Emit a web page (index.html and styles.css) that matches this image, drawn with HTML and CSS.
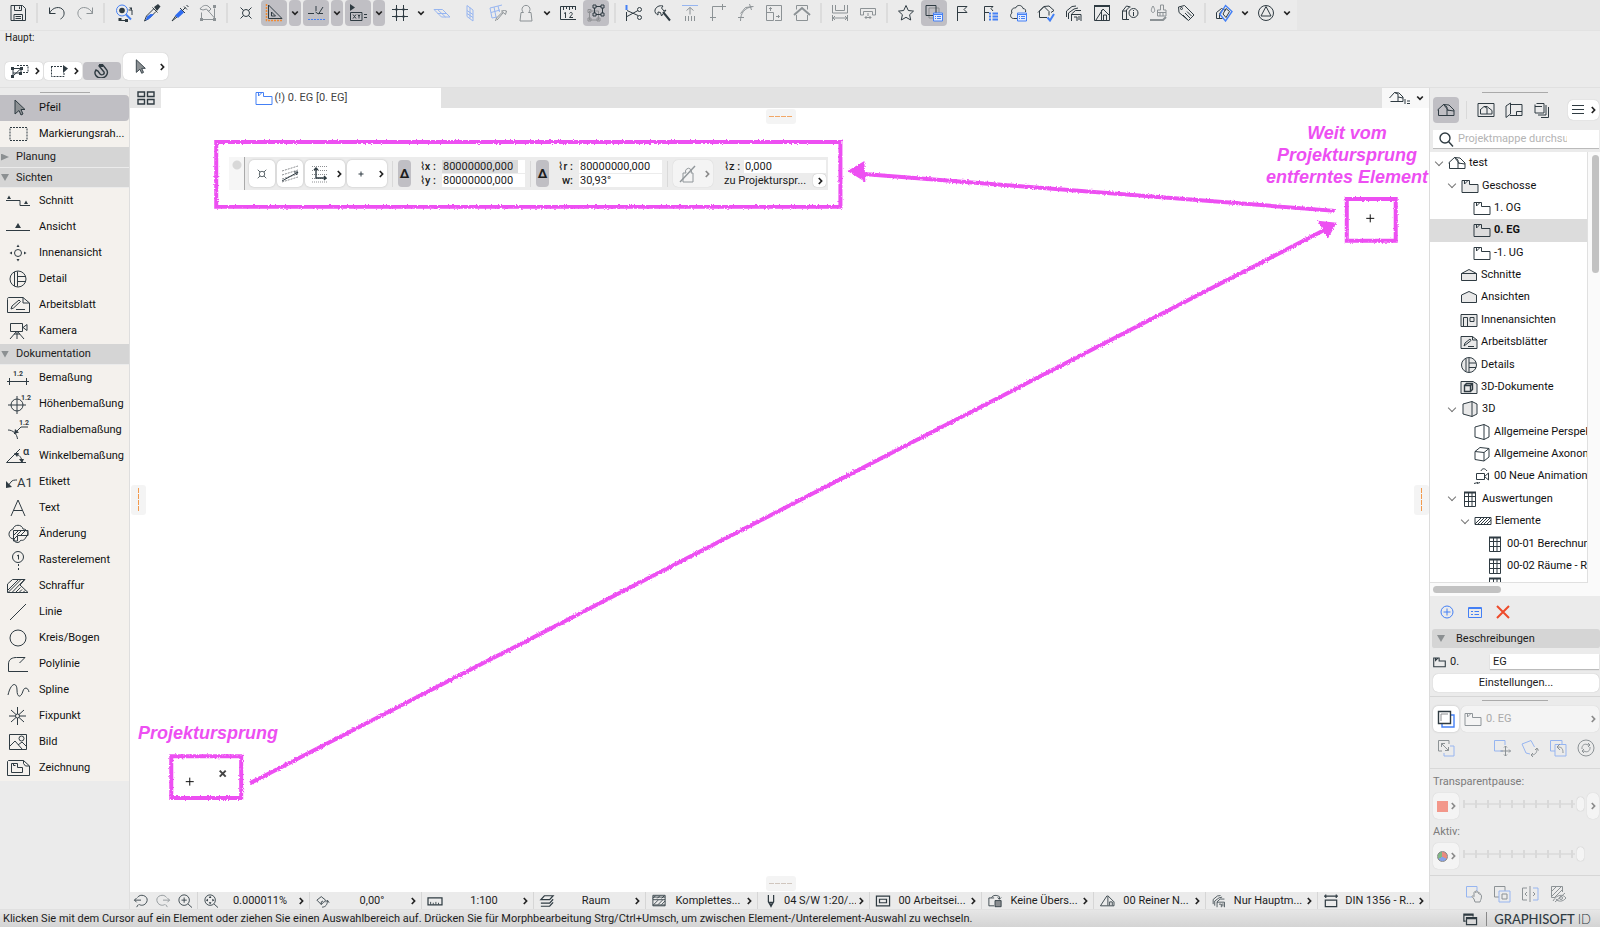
FILE: index.html
```html
<!DOCTYPE html>
<html lang="de">
<head>
<meta charset="utf-8">
<meta name="viewport" content="width=device-width, initial-scale=1">
<title>(!) 0. EG [0. EG]</title>
<link rel="stylesheet" href="styles.css">
</head>
<body>
<svg class="sprite" aria-hidden="true">
  <symbol id="down" viewBox="0 0 10 10"><path class="bold" d="M2.2 3.5 5 6.3 7.8 3.5"/></symbol>
  <symbol id="next" viewBox="0 0 10 10"><path class="bold" d="M3.8 2 6.6 5 3.8 8"/></symbol>
  <symbol id="save" viewBox="0 0 18 18"><path d="M2 1.5h11.5l3 3v12H2zM5.500 1.500v5h7v-5M10.500 2.500v2.500M5 16.500v-6h8.500v6M6.500 12.500h5.500M6.500 14.500h5.500"/></symbol>
  <symbol id="undo" viewBox="0 0 18 18"><path d="M1.500 3.500v6h6M1.500 9.500C4 3 12.500 1.500 15.500 6.500c1.500 3.500 0 7-3 8.500"/></symbol>
  <symbol id="redo" viewBox="0 0 18 18"><path d="M16.500 3.500v6h-6M16.500 9.500C14 3 5.500 1.500 2.500 6.500c-1.500 3.500 0 7 3 8.500"/></symbol>
  <symbol id="find" viewBox="0 0 18 18"><circle class="blue" cx="7" cy="6.500" r="5.500"/><circle class="solid" cx="7" cy="6.500" r="2.800"/><path class="blue thick" d="m11 10.500 5 5"/><path d="M13.500 6h3.500V11M5 14.500v2h6"/><path class="solid" d="M14 3.500h3v3zM3.500 14h3v3h-3zM10 15h3v3h-3z"/></symbol>
  <symbol id="dropper" viewBox="0 0 18 18"><path class="solid" d="m11 3 4-3 2.500 2.500L14 7z"/><path d="m9.500 3.500 5 5M10.500 5 3.500 12l-2 5 4.500-2.500 7-7"/><path class="bluefill" d="m7.500 10 3.500.2L6 15l-3.500 1.500 1.500-4z"/></symbol>
  <symbol id="syringe" viewBox="0 0 18 18"><path d="m9 4 5 5M13 2.500l3 3M15.500 1l2 2M11.500 6.500l3-3M5 11.500 1 17l5-4"/><path class="bluefill" d="m10 5.500 3 3L7 14l-3-2.500z"/></symbol>
  <symbol id="frametool" viewBox="0 0 18 18"><path d="M2.500 8.500v7M2.500 15.500h13v-11M8.500 6l7 8M1 5c2-3 5-4.500 8-3l3 3-2.500 2.500L7.500 5 4 6z"/><path class="solid" d="M1 14h3v3H1zM14 14h3v3h-3zM14 1h3v3h-3z"/></symbol>
  <symbol id="gravity" viewBox="0 0 18 18"><circle cx="9" cy="9" r="3.500"/><path d="m3.500 3.500 3 3M14.500 3.500l-3 3M3.500 14.500l3-3M14.500 14.500l-3-3"/></symbol>
  <symbol id="setsquare" viewBox="0 0 18 18"><path class="orange dash" d="M1.500 0v16.500H18"/><path d="M3.500 1v13.500H17zM6.500 8v4h4z"/></symbol>
  <symbol id="snapguide" viewBox="0 0 18 18"><path d="M1 9.500h6M11.500 9.500H16M9 2v5M8.500 8l3 2L16 3"/><path class="blue dash" d="M1 15.500h17"/></symbol>
  <symbol id="tracker" viewBox="0 0 18 18"><path class="solid" d="M1 0v7l5-3.500z"/><path d="M1.500 8.500H13v8H1.500zM4 10.500l3 4M7 10.500l-3 4M9 10.500l1 2 1-2M10 12.500v2M15 10.500h3M15 13.500h3"/></symbol>
  <symbol id="hash" viewBox="0 0 18 18"><path d="M5.500 1v16M12.500 1v16M1 5.500h16M1 12.500h16"/><path class="solid" d="M4.500 4.500h2v2h-2zM11.500 4.500h2v2h-2zM4.500 11.500h2v2h-2zM11.500 11.500h2v2h-2z"/></symbol>
  <symbol id="plane" viewBox="0 0 18 18"><path class="blue" d="M1 5.500h8.500L17 13H8.500zM4.500 9.500h8.500M4.500 5.500 12.500 13"/></symbol>
  <symbol id="wallplane" viewBox="0 0 18 18"><path class="blue" d="M6 1.500v11l6 4.500V6zM9 3.500v11M6 6.500l6 4M6 9.500l6 4"/></symbol>
  <symbol id="gridpick" viewBox="0 0 18 18"><path class="blue" d="m1 4 12-3M1 4l2 10 5-1M2 8.500 11 6M5 3l2 10M9 2l1.500 6"/><path d="m8 16 6-7M6.500 17l1-3 6-6M12.500 7l4 3.500 1-3.500-2-.5z"/></symbol>
  <symbol id="weight" viewBox="0 0 18 18"><path d="M6.500 8.500a4 4 0 1 1 5 0H14l1 8.500H3l1-8.500z"/></symbol>
  <symbol id="ruler12" viewBox="0 0 18 18"><path d="M17 2.500H1.500v13H17M4.500 3v3M7.500 3v2M10.500 3v3M13.500 3v2M16.500 3v3M5 9.500l1.500-1v5.500M10.500 9.500c1-2 3.500-1 2.500 1l-2.500 3h3.500"/></symbol>
  <symbol id="group" viewBox="0 0 18 18"><path class="gray" d="M2.500 7h9v9h-9zM1 5.500h3v3H1zM1 14h3v3H1zM10 14h3v3h-3z"/><path d="M7.500 2.500h8v8h-8z"/><path class="box" d="M6 1h3v3H6zM14 1h3v3h-3zM6 9h3v3H6zM14 9h3v3h-3z"/></symbol>
  <symbol id="scissors" viewBox="0 0 18 18"><path class="blue thick" d="M1.500 1v5"/><path d="M1.500 8v9M2 6.500l11 5M2 12.500l11-6"/><circle cx="14.500" cy="5.500" r="2"/><circle cx="14.500" cy="13.500" r="2"/></symbol>
  <symbol id="axe" viewBox="0 0 18 18"><path d="M2 6c1-3 4-5 8-4L8.500 4 11 7l2-1-4.500 6-1-3.500L5 8v3C3 10 1.500 8.500 2 6z"/><path class="thick" d="m10 8 7 8.500"/></symbol>
  <symbol id="elevate" viewBox="0 0 18 18"><path class="blue" d="M1 1.500h16"/><path d="M9 3.500v7M5.500 6.500 9 3.500l3.500 3M4.500 12v5M7.500 12v5M10.500 12v5M13.500 12v5"/></symbol>
  <symbol id="corner" viewBox="0 0 18 18"><path d="M3.500 17V2.500H17M1 13.500h6M13.500 0v6"/></symbol>
  <symbol id="fillet" viewBox="0 0 18 18"><path d="M3.500 17c0-8 4-13 12-14.500M1 13.500h6M12.500 0l2 6M3.500 9.500l5-6 8-1"/></symbol>
  <symbol id="resize" viewBox="0 0 18 18"><path d="M1.500 9V1.500h15v15H10M1.500 8.500h7v8h-7zM5.500 7V3.500M4 5l1.500-1.500L7 5M11 12.500h3.500M13 11l1.500 1.500L13 14"/></symbol>
  <symbol id="roof" viewBox="0 0 18 18"><path d="M3.500 5.500v-4h11v4M3.500 11v5.500h11V11"/><path class="thick" d="m1 11 8-7 8 7"/></symbol>
  <symbol id="spanwide" viewBox="0 0 18 18"><path d="M1.500 1v8h15V1M4.500 1v5.500h9V1M1.500 11v6M16.500 11v6M2 14h14M4 12l-2 2 2 2M14 12l2 2-2 2"/></symbol>
  <symbol id="spanlow" viewBox="0 0 18 18"><path d="M1.500 11V4.500h15V11h-3V7.500h-9V11zM6 13.500h6M7.500 12 6 13.500 7.500 15M10.500 12l1.500 1.500-1.500 1.500M9 9v3"/></symbol>
  <symbol id="star" viewBox="0 0 18 18"><path d="m9 1.500 2.300 5 5.200.6-3.900 3.600 1.100 5.300L9 13.300 4.300 16l1.100-5.300L1.500 7.100l5.200-.6z"/></symbol>
  <symbol id="layersettings" viewBox="0 0 18 18"><path class="gray" d="M4 4h10v10H4z"/><path d="M1 1.500h10v10H1z"/><path class="bluebox" d="M8.500 9h9v8h-9z"/><path class="blue" d="M8.500 10.500h9M10 12.500h1M12 12.500h4M10 14.500h1M12 14.500h4"/></symbol>
  <symbol id="flag" viewBox="0 0 18 18"><path d="M4.500 17V2.500H14l-3 3 3 3H4.500"/></symbol>
  <symbol id="flaglist" viewBox="0 0 18 18"><path d="M3.500 17V2.500H12l-2 2 2 2.500M3.500 8.500H8"/><path class="blue thick" d="M8 9.500h2M11.500 9.500H17M8 12.500h2M11.500 12.500H17M8 15.500h2M11.500 15.500H17"/></symbol>
  <symbol id="cloudlist" viewBox="0 0 18 18"><path d="M8 14.500H4.500c-3 0-4-4-1.500-5.500C1.500 6 4 3.500 6.500 4 8 .5 13 .5 14 4.500c2.500 0 3 2 2.500 3.500"/><path class="bluebox" d="M8.500 9h9v8h-9z"/><path class="blue" d="M8.500 10.500h9M10 12.500h1M12 12.500h4M10 14.500h1M12 14.500h4"/></symbol>
  <symbol id="housecheck" viewBox="0 0 18 18"><path d="M10 13.500H2.500V7L7 2.500l5 5v4M7 2.500 12 2l5 4.500-3 2M1 8.500 7 2.500"/><path class="blue thick" d="m10.500 13.500 2.500 3L17 10"/></symbol>
  <symbol id="houses" viewBox="0 0 18 18"><path d="M1.500 13V7L7 2.500l4-.5M3.500 15V9L9 5l4-1M6.500 17v-7l4-3.500H16M6.500 10.500H16v6.500M9 13h3v4M14 12v4"/></symbol>
  <symbol id="facade" viewBox="0 0 18 18"><path class="thick" d="M1 2h16"/><path d="M1.500 3v13.500h15V3M3 16 10 5l6 6M8.500 6v10M10.500 16v-5h3v5"/></symbol>
  <symbol id="wallinfo" viewBox="0 0 18 18"><circle cx="12.500" cy="9" r="4.500"/><path d="M12.500 8v4M12.500 6v1M8 15.500H1.500V7l4-5 4 1M5.500 15V6l3-3M1.500 7h4"/></symbol>
  <symbol id="paint" viewBox="0 0 18 18"><path d="M4 2c2 3 2.500 6 0 6.500C1.500 8 2 5 4 2zM11.500 1h3v5h2.500v6H8.500V6h3zM8.500 8.500H17M11 8.500V12M14 8.500V12"/><path class="thick" d="M1 16h13l3-3"/></symbol>
  <symbol id="tag" viewBox="0 0 18 18"><path d="m1.500 3 6-1.500L17 11l-5.500 5.500L2 8.500zM8 9l5 5M10 7.500l4.500 4.500M6 11l4.500 4.500"/><circle cx="4.500" cy="4.500" r="1"/></symbol>
  <symbol id="camhouse" viewBox="0 0 18 18"><path d="M1.500 14.500v-6l5-4 4 2M1.500 14.500h6M4.500 14V9.500L9 4"/><path class="blue mid" d="m10.500 1.500 6.500 6-6.500 9.500L5 10.500z"/><path d="m11 4.500 3.500 3-3.500 6L8 10z"/></symbol>
  <symbol id="tricircle" viewBox="0 0 18 18"><circle cx="9" cy="9" r="7.500"/><path d="m9 2.500 5 9.500H4z"/></symbol>

  <symbol id="pointer" viewBox="0 0 24 20"><path class="cursor" d="M9 2v14l4-3.500 2 4.500 2-1-2-4.500h4z"/></symbol>
  <symbol id="marquee" viewBox="0 0 24 20"><path class="dash" d="M4 3.500h17v13H4z"/></symbol>
  <symbol id="section" viewBox="0 0 24 20"><path d="M0 9.500h14v5M14 14.500h10"/><path class="solid" d="M1 8h4L3 4.500zM18 13h4l-2-3.500z"/></symbol>
  <symbol id="elevation" viewBox="0 0 24 20"><path d="M0 13.500h24"/><path class="solid" d="M9 11h6l-3-5z"/></symbol>
  <symbol id="interior" viewBox="0 0 24 20"><circle cx="12" cy="10" r="3.500"/><path class="solid" d="M10.500 4h3L12 1.500zM10.500 16h3L12 18.500zM6 8.500v3L3.500 10zM18 8.500v3l2.500-1.500z"/></symbol>
  <symbol id="detail" viewBox="0 0 24 20"><circle cx="12" cy="10" r="8"/><path d="M8.500 3v14M11.500 2.500v15M11.500 7.500H19M11.500 12.500H19"/></symbol>
  <symbol id="worksheet" viewBox="0 0 24 20"><path d="M2.500 2.500H17L23.500 8v9.500h-22v-13c0-1 .3-2 1-2zM17 2.500V8h6.500M5 14l1-3 7-6 1.500 1.500-7 6.500zM10 14.500h9"/></symbol>
  <symbol id="camera" viewBox="0 0 24 20"><path d="M4.500 2.500h12v8h-12zM17 6.500l4-3v6zM11 10.500V18M10 11 4 18M12 11l6 7M8 13h6"/></symbol>
  <symbol id="change" viewBox="0 0 24 20"><path d="M7 5c1-5 9-5 10 0 5 0 6 6 3 8-1 3-4 4-5 3-2 4-7 3-7-1-6 0-7-8-1-10zM7.500 6.500H22v5H11.500V17h-4zM8 11l4-4M11 11l4-4M15 11l4-4M8 15l3-3"/></symbol>
  <symbol id="text" viewBox="0 0 24 20"><path d="M5 18 12 2l7 16M7.500 12.500h9"/></symbol>
  <symbol id="gridelement" viewBox="0 0 24 20"><circle cx="12" cy="7" r="5.500"/><path d="m11 6 1.500-1v4.500M12.500 14v2M12.500 18v2"/></symbol>
  <symbol id="fill" viewBox="0 0 24 20"><path d="M1.500 16.500V8l5-4.500H19L14 9l8 7.500zM2 14 12 4M2 16.500l13-13M6 16.500 18 4M9.500 16.500l5-5M13 16.500l3-3M17 16.500l2-2"/></symbol>
  <symbol id="line" viewBox="0 0 24 20"><path d="M4 18 20 2"/></symbol>
  <symbol id="circle" viewBox="0 0 24 20"><circle cx="12" cy="10" r="8"/></symbol>
  <symbol id="polyline" viewBox="0 0 24 20"><path d="M22 17.500H2.500V10c0-5 4-6.500 8-6.500h8.500L13.500 9"/></symbol>
  <symbol id="spline" viewBox="0 0 24 20"><path d="M2 15C5 2 11 2 11 10c0 8 4 8 6 1 1-4 5-4 6 1"/></symbol>
  <symbol id="hotspot" viewBox="0 0 24 20"><circle cx="11.500" cy="10" r="2"/><path d="M11.500 1v7M11.500 12v7M3 10h6.500M13.500 10H20M5 4l5 4.500M18 4l-5 4.500M5 16l5-4.500M18 16l-5-4.500"/></symbol>
  <symbol id="picture" viewBox="0 0 24 20"><path d="M3.500 2.500h17v15h-17zM4 14l5-5 7 8M12 13l4-3 4 4"/><circle cx="15.500" cy="6.500" r="2.500"/></symbol>
  <symbol id="drawing" viewBox="0 0 24 20"><path d="M2.500 2.500h15L23.500 8v9.500h-22v-14zM17.500 2.500v3l2 2.500h4M5.500 5.500h6v4h5v5h-11zM7.500 5.500v2h2"/></symbol>

  <symbol id="story" viewBox="0 0 18 16"><path d="M1 14.500v-12h7.500v4H17v8zM3.500 3v3l3-3"/></symbol>
  <symbol id="project" viewBox="0 0 18 16"><path d="M.5 8 6.500 2.500 10 5v8.500H1.500V7.500M6.500 2.500 12 3l5 5v5.500h-7M10 8l7 1M6.500 2.500l5 6"/></symbol>
  <symbol id="sections" viewBox="0 0 18 16"><path class="shade" d="M1.500 6.500 9 2.500l7.500 4v7h-15z"/><path d="M1.500 6.500h15"/></symbol>
  <symbol id="elevations" viewBox="0 0 18 16"><path class="shade" d="M1.500 6 9 2.500 16.500 6v7.500h-15z"/></symbol>
  <symbol id="interiors" viewBox="0 0 18 16"><path class="shade" d="M1 2.500h16v12H1z"/><path d="M3.500 14V5.500h4V14M10 5.500h4v4h-4z"/></symbol>
  <symbol id="worksheets" viewBox="0 0 18 16"><path class="shade" d="M1 2.500h11.500L17 6v8.500H1z"/><path d="M12.500 2.500V6H17M4 12l1-3 5-4 1 1.500-5 4zM8 12.500h6"/></symbol>
  <symbol id="details" viewBox="0 0 18 16"><circle class="shade" cx="9" cy="8" r="7.500"/><path d="M6 1.500v13M9 1v14M9 6h7M9 10.500h7"/></symbol>
  <symbol id="docs3d" viewBox="0 0 18 16"><path class="shade" d="M1 2.500h12L17 5v9.500H1z"/><path class="mid" d="M4.500 6.500h6v6h-6zM4.500 6.500l2-2h6v6l-2 2M10.500 6.500l2-2"/></symbol>
  <symbol id="box3d" viewBox="0 0 18 16"><path class="shade" d="m2 3 9-2.500 5 2.500v10l-5 2.500L2 13z"/><path d="M11 .5v15"/></symbol>
  <symbol id="persp" viewBox="0 0 18 16"><path d="m2 3 9-2.500 5 2.500v10l-5 2.500L2 13zM11 .5v15"/></symbol>
  <symbol id="axon" viewBox="0 0 18 16"><path d="m2 5.500 5-4 9 1V11l-5 4-9-1.500zM2 5.500l9 1 5-4M11 6.500V15"/></symbol>
  <symbol id="anim" viewBox="0 0 18 16"><path d="M3.500 5.500h8v6h-8zM11.500 8.500l4-3.500v7zM1 15.500l4-1M8 3c1-3 4-3 6 0M7 14.500l-3 1"/></symbol>
  <symbol id="table" viewBox="0 0 18 16"><path d="M3.500 1v14.500h11V1M7.500 1v14.500M11 1v14.500M3.500 5.500h11M3.500 10.500h11"/><path class="thick" d="M3 1.500h12"/></symbol>
  <symbol id="hatch" viewBox="0 0 18 16"><path d="M1 4.500h16v7H1zM1 11l6-6M4 11l6-6M7 11l6-6M10 11l6-6M13 11l4-4"/></symbol>
  <symbol id="viewmap" viewBox="0 0 18 16"><path d="M1 1.500h16v13H1zM3 8l4-3.500 3 1.500v6H3.500V8M7 4.500h3l5 4v3.500h-5"/></symbol>
  <symbol id="layout" viewBox="0 0 18 16"><path d="M1 4v11.500L5.500 12V1zM5.500 2.500H17v11H5M11.500 13V9.500H17"/></symbol>
  <symbol id="publish" viewBox="0 0 18 16"><path d="M2 2.500v8.500h9V1.500H3.500M2 4.500h7M13 3v10H5M15.500 5v10.500H8"/></symbol>
  <symbol id="magnifier" viewBox="0 0 18 16"><circle class="mid" cx="8" cy="7" r="5"/><path class="mid" d="m11.500 10.500 4.500 5"/></symbol>
  <symbol id="plus" viewBox="0 0 18 16"><circle class="blue" cx="9" cy="8" r="6"/><path class="blue" d="M9 4.500v7M5.500 8h7"/></symbol>
  <symbol id="list" viewBox="0 0 18 16"><path class="blue" d="M2.500 3.500h13v10h-13zM2.500 4.500h13M5 7.500h2M8.500 7.500H13M5 10.500h2M8.500 10.500H13"/></symbol>
  <symbol id="delete" viewBox="0 0 18 16"><path class="red" d="m3 2 12 12M15 2 3 14"/></symbol>
  <symbol id="trace" viewBox="0 0 18 18"><path class="blue mid" d="M14 5h3v12H5v-3"/><path class="mid" d="M1.500 1.500h12v12h-12z"/><path class="gray" d="M4 11V4h7"/></symbol>
  <symbol id="swap" viewBox="0 0 18 18"><path class="blue" d="M13 7h4v10H7v-3"/><path d="M12 5V1.500H1.500V12H5M4.500 4.500l7 7M4.500 8V4.500H8M11.500 8v3.500H8"/></symbol>
  <symbol id="move" viewBox="0 0 18 18"><path class="blue" d="M10 12H1.500V1.500H12V6"/><path d="M12.500 7v10M7.500 12h10M11 8.500 12.500 7 14 8.500M11 15.500l1.500 1.500 1.500-1.500M16 10.500l1.500 1.500-1.500 1.500"/></symbol>
  <symbol id="rotate" viewBox="0 0 18 18"><path class="blue" d="m9 15-4-1L1 5l9-3.500L13.500 8"/><path d="M10 16c4 0 6-2 6-6M14 11l2-2 1.500 2.500M12 14l-2 2 2 2"/></symbol>
  <symbol id="backswap" viewBox="0 0 18 18"><path class="blue" d="M13 5V1.500H1.500V12H6M6 5.500h11V17H6z"/><path d="M14 14c0-4-1-6-5-6M11 5 8 8l3 3"/></symbol>
  <symbol id="refresh" viewBox="0 0 18 18"><circle cx="9" cy="9" r="8"/><path d="M5 10c-.5-4 3-6 6-4h2M13 8c.5 4-3 6-6 4H5M11 4l2 2-2 2M7 14l-2-2 2-2"/></symbol>
  <symbol id="hand" viewBox="0 0 18 18"><path class="blue" d="M7 12H1.500V1.500H12V6"/><path d="m9 14-2-2.500c0-1 1.500-1 2 0V7.500c0-1 1.500-1 1.500 0V6.500c0-1 1.500-1 1.500 0v1c0-1 1.500-1 1.500 0v1c0-1 1.500-1 1.500 0V10c1-1 1.500 0 1.500 1 0 3-1 4-1.500 6H10z"/></symbol>
  <symbol id="overlap" viewBox="0 0 18 18"><path d="M6 12H1.500V1.500H12V6"/><path class="blue" d="M6 6h11v11H6z"/><path d="M9 9h5v5H9z"/></symbol>
  <symbol id="split" viewBox="0 0 18 18"><path d="M6 3H1.500v12H6M9 1v16M6 7 4 9l2 2M12 7l2 2-2 2"/><path class="blue" d="M12 3h5v12h-5"/></symbol>
  <symbol id="hidehatch" viewBox="0 0 18 18"><path d="M6 12.500H2.500v-11h11V7M3 6l4-4M3 11l9-9M6 12l7-7M4 16C8 9 14 9 17 13c-3 4-8 4-10 1M6 17 16 8"/><circle cx="12" cy="13" r="1.500"/></symbol>

  <symbol id="zback" viewBox="0 0 18 16"><path d="M5 4c3-5 12-2 11 3.500C15 12.500 10 14 7 12M1.500 7H9M4 4.500 1.500 7 4 9.500M6 12l-2 3"/></symbol>
  <symbol id="zforward" viewBox="0 0 18 16"><path d="M13 4C10-1 1 2 2 7.500 3 12.500 8 14 11 12M9 7h7.500M14 4.500 16.500 7 14 9.500M12 12l2 3"/></symbol>
  <symbol id="zoomin" viewBox="0 0 18 16"><circle cx="8" cy="7" r="6"/><path d="M8 4v6M5 7h6M12.500 11.500 17 15.500"/></symbol>
  <symbol id="zoomfit" viewBox="0 0 18 16"><circle cx="8" cy="7" r="6"/><path d="M12.500 11.500 17 15.500"/><path class="solid" d="M6.500 4.500h3L8 2zM6.500 9.500h3L8 12zM5.500 5.500v3L3 7zM10.500 5.500v3L13 7z"/></symbol>
  <symbol id="orient" viewBox="0 0 18 16"><path d="m2 7 5-4 5 4-5 5zM8 15c4 0 6-3 6-7M11.500 9.500 14 7l2 3M7 12V9l2-1"/></symbol>
  <symbol id="ruler" viewBox="0 0 18 16"><path class="mid" d="M1 4.500h16v8H1z"/><path d="M4 12V9M7 12v-2M10 12V9M13 12v-2"/></symbol>
  <symbol id="layers" viewBox="0 0 18 16"><path class="mid" d="M2 6.500 6 2h10l-4 4.500zM2 10.500h10L16 6M2 14h10l4-4.500"/></symbol>
  <symbol id="structure" viewBox="0 0 18 16"><path d="M2 3.500h14M2 6.500h14M2 12.500h14M3 12l5-5M8 12l5-5M12 12l4-4M2 1.500h14v12H2zM2 5l3-3M7 5l3-3M12 5l3-3"/></symbol>
  <symbol id="pen" viewBox="0 0 18 16"><path class="mid" d="M6 1v8l3 5 3-5V1M6 9.500h6M9 10v5"/></symbol>
  <symbol id="frame" viewBox="0 0 18 16"><path class="mid" d="M1.500 2.500h15v11h-15zM5 6h8v4H5z"/></symbol>
  <symbol id="override" viewBox="0 0 18 16"><path d="M8 13.500H2v-9h6M5 4c2-3 6-3 9-1v3M12 4l2 2 2-2"/><path class="graybox" d="M9 7.500h7v7H9z"/></symbol>
  <symbol id="renov" viewBox="0 0 18 16"><path d="m9 2-7.500 11.500H17V9L10 2v11M12 13V9h3v4"/></symbol>
  <symbol id="dimstd" viewBox="0 0 18 16"><path class="mid" d="M1 2.500h16M3 .5v4M15 .5v4M2.500 7h13v7.500h-13z"/></symbol>
  <symbol id="windows" viewBox="0 0 18 16"><path class="mid" d="M4 10.500H2V2.500h10.500V5M5 6.500h11.500v8H5zM2 3.500h10M5 7.500h11"/></symbol>
  <symbol id="box-link" viewBox="0 0 18 14"><path d="M2 12V4.500h8M2 12l8-7.500M2 9h8V4.500"/><path class="dash" d="M6 1.500h11v7h-7"/><path class="solid" d="M0 3h3v3H0zM0 11h3v3H0zM9 3h3v3H9zM8 8h3v3H8z"/></symbol>
  <symbol id="marq-sel" viewBox="0 0 18 14"><path class="dash" d="M1 2.500h12M1.500 2.500v10H14V9"/><path class="solid" d="M13 1v8l5-4.500z"/></symbol>
  <symbol id="magnet" viewBox="0 0 18 14"><path class="mid" d="M3 6c-3 4 1 8 5 8 6 0 8-6 5-9L9 0 6 2l5 6c1 2-2 4-4 2L5 7z"/><path class="solid" d="M6 0h4v3H6z"/></symbol>
  <symbol id="guides" viewBox="0 0 18 18"><path class="dash gray" d="m1 6 16-5M1 10l16-5M1 14l16-5M1 17l16-5"/><path d="M1 16 17 7M13 7h4l-2 3"/></symbol>
  <symbol id="gridaxes" viewBox="0 0 18 18"><path class="dots gray" d="M1 1.500h16M1 5.500h16M1 9.500h16M1 13.500h16M1 17h16"/><path class="mid" d="M5 3v10h10M3 5l2-2 2 2M13 11l2 2-2 2"/></symbol>
  <symbol id="nogravity" viewBox="0 0 18 18"><path d="M7 8a3 3 0 1 1 5 0h2v9H4V8z"/><path class="mid" d="M1 17 16 1"/></symbol>
</svg>

<div class="app">
  <div class="toolbar" role="toolbar" aria-label="Standard">
    <button class="tb" aria-label="Sichern"><svg><use href="#save"/></svg></button>
    <i class="sep wide"></i>
    <button class="tb" aria-label="Widerrufen"><svg><use href="#undo"/></svg></button>
    <button class="tb off" aria-label="Wiederholen"><svg><use href="#redo"/></svg></button>
    <i class="sep wide"></i>
    <button class="tb" aria-label="Suchen"><svg><use href="#find"/></svg></button>
    <button class="tb" aria-label="Parameter aufnehmen"><svg><use href="#dropper"/></svg></button>
    <button class="tb" aria-label="Parameter übertragen"><svg><use href="#syringe"/></svg></button>
    <button class="tb off" aria-label="Bearbeiten"><svg><use href="#frametool"/></svg></button>
    <i class="sep"></i>
    <button class="tb" aria-label="Fangpunkt"><svg><use href="#gravity"/></svg></button>
    <button class="tb on" aria-label="Hilfslinien"><svg><use href="#setsquare"/></svg></button>
    <button class="tb drop on" aria-label="Hilfslinien Optionen"><svg class="chev"><use href="#down"/></svg></button>
    <button class="tb on" aria-label="Fangreferenz"><svg><use href="#snapguide"/></svg></button>
    <button class="tb drop on" aria-label="Fangreferenz Optionen"><svg class="chev"><use href="#down"/></svg></button>
    <button class="tb on" aria-label="Tracker"><svg><use href="#tracker"/></svg></button>
    <button class="tb drop on" aria-label="Tracker Optionen"><svg class="chev"><use href="#down"/></svg></button>
    <button class="tb" aria-label="Raster"><svg><use href="#hash"/></svg></button>
    <button class="tb drop" aria-label="Raster Optionen"><svg class="chev"><use href="#down"/></svg></button>
    <button class="tb off" aria-label="Ebene"><svg><use href="#plane"/></svg></button>
    <button class="tb off" aria-label="Vertikale Ebene"><svg><use href="#wallplane"/></svg></button>
    <button class="tb off" aria-label="Ebene aufnehmen"><svg><use href="#gridpick"/></svg></button>
    <button class="tb off" aria-label="Schwerkraft"><svg><use href="#weight"/></svg></button>
    <button class="tb drop" aria-label="Schwerkraft Optionen"><svg class="chev"><use href="#down"/></svg></button>
    <button class="tb" aria-label="Messen"><svg><use href="#ruler12"/></svg></button>
    <button class="tb on" aria-label="Gruppen"><svg><use href="#group"/></svg></button>
    <i class="sep"></i>
    <button class="tb" aria-label="Trennen"><svg><use href="#scissors"/></svg></button>
    <button class="tb" aria-label="Anpassen"><svg><use href="#axe"/></svg></button>
    <button class="tb off" aria-label="Höhe"><svg><use href="#elevate"/></svg></button>
    <button class="tb off" aria-label="Verschneiden"><svg><use href="#corner"/></svg></button>
    <button class="tb off" aria-label="Abrunden"><svg><use href="#fillet"/></svg></button>
    <button class="tb off" aria-label="Größe ändern"><svg><use href="#resize"/></svg></button>
    <button class="tb off" aria-label="Dach"><svg><use href="#roof"/></svg></button>
    <i class="sep"></i>
    <button class="tb off" aria-label="Spannweite"><svg><use href="#spanwide"/></svg></button>
    <button class="tb off" aria-label="Abstand"><svg><use href="#spanlow"/></svg></button>
    <i class="sep"></i>
    <button class="tb" aria-label="Favoriten"><svg><use href="#star"/></svg></button>
    <button class="tb on" aria-label="Ebeneneinstellungen"><svg><use href="#layersettings"/></svg></button>
    <button class="tb" aria-label="Markierung"><svg><use href="#flag"/></svg></button>
    <button class="tb" aria-label="Markierungsliste"><svg><use href="#flaglist"/></svg></button>
    <button class="tb" aria-label="Änderungsliste"><svg><use href="#cloudlist"/></svg></button>
    <button class="tb" aria-label="Modellprüfung"><svg><use href="#housecheck"/></svg></button>
    <button class="tb" aria-label="Module"><svg><use href="#houses"/></svg></button>
    <button class="tb" aria-label="Fassade"><svg><use href="#facade"/></svg></button>
    <button class="tb" aria-label="Elementinfo"><svg><use href="#wallinfo"/></svg></button>
    <button class="tb off" aria-label="Oberfläche"><svg><use href="#paint"/></svg></button>
    <button class="tb" aria-label="Klassifizierung"><svg><use href="#tag"/></svg></button>
    <i class="sep"></i>
    <button class="tb" aria-label="3D-Ansicht"><svg><use href="#camhouse"/></svg></button>
    <button class="tb drop" aria-label="3D-Optionen"><svg class="chev"><use href="#down"/></svg></button>
    <button class="tb" aria-label="Ausrichtung"><svg><use href="#tricircle"/></svg></button>
    <button class="tb drop" aria-label="Ausrichtung Optionen"><svg class="chev"><use href="#down"/></svg></button>
    <span class="toolbar-rest"></span>
  </div>

  <div class="infobox">
    <span class="infobox-label">Haupt:</span>
    <div class="infobox-row">
      <button class="chip" aria-label="Elementauswahl"><svg><use href="#box-link"/></svg><svg class="chev"><use href="#next"/></svg></button>
      <button class="chip" aria-label="Rahmenauswahl"><svg><use href="#marq-sel"/></svg><svg class="chev"><use href="#next"/></svg></button>
      <button class="chip pressed" aria-label="Magnet"><svg><use href="#magnet"/></svg></button>
      <button class="chip tall" aria-label="Pfeil-Werkzeug"><svg><use href="#pointer"/></svg><svg class="chev"><use href="#next"/></svg></button>
    </div>
  </div>

  <div class="main">
    <nav class="toolbox" aria-label="Werkzeuge">
      <i class="grip"></i>
      <div class="tools">
        <button class="tool active"><svg><use href="#pointer"/></svg>Pfeil</button>
        <button class="tool"><svg><use href="#marquee"/></svg>Markierungsrah...</button>
        <button class="group closed">Planung</button>
        <button class="group">Sichten</button>
        <button class="tool"><svg><use href="#section"/></svg>Schnitt</button>
        <button class="tool"><svg><use href="#elevation"/></svg>Ansicht</button>
        <button class="tool"><svg><use href="#interior"/></svg>Innenansicht</button>
        <button class="tool"><svg><use href="#detail"/></svg>Detail</button>
        <button class="tool"><svg><use href="#worksheet"/></svg>Arbeitsblatt</button>
        <button class="tool"><svg><use href="#camera"/></svg>Kamera</button>
        <button class="group">Dokumentation</button>
        <button class="tool"><svg viewBox="0 0 24 20"><path d="M1 13.500h22M3.500 10v7M20.500 10v7"/><text x="7" y="8" class="glyph">1.2</text></svg>Bemaßung</button>
        <button class="tool"><svg viewBox="0 0 24 20"><circle cx="11" cy="11" r="6"/><path d="M2 11h18M11 2v18"/><text x="15" y="6" class="glyph">1.2</text></svg>Höhenbemaßung</button>
        <button class="tool"><svg viewBox="0 0 24 20"><path d="M2 10c5 0 9 4 9.500 9M8 14l7-7h7"/><path class="solid" d="m8 14 1-5 4 3.500z"/><text x="13" y="5" class="glyph">1.2</text></svg>Radialbemaßung</button>
        <button class="tool"><svg viewBox="0 0 24 20"><path d="M14 3 .5 16.500H20M9 8c4 0 7 4 7 8"/><path class="solid" d="m8 7 5 0-2 4zM13 13h5l-2 4z"/><text x="17" y="9" class="glyph big">α</text></svg>Winkelbemaßung</button>
        <button class="tool"><svg viewBox="0 0 24 20"><path d="m1 15 4-5c1-2 4-2 6-2"/><path class="solid" d="M0 16V9l6 6z"/><text x="11" y="15" class="glyph large">A1</text></svg>Etikett</button>
        <button class="tool"><svg><use href="#text"/></svg>Text</button>
        <button class="tool"><svg><use href="#change"/></svg>Änderung</button>
        <button class="tool"><svg><use href="#gridelement"/></svg>Rasterelement</button>
        <button class="tool"><svg><use href="#fill"/></svg>Schraffur</button>
        <button class="tool"><svg><use href="#line"/></svg>Linie</button>
        <button class="tool"><svg><use href="#circle"/></svg>Kreis/Bogen</button>
        <button class="tool"><svg><use href="#polyline"/></svg>Polylinie</button>
        <button class="tool"><svg><use href="#spline"/></svg>Spline</button>
        <button class="tool"><svg><use href="#hotspot"/></svg>Fixpunkt</button>
        <button class="tool"><svg><use href="#picture"/></svg>Bild</button>
        <button class="tool"><svg><use href="#drawing"/></svg>Zeichnung</button>
      </div>
    </nav>

    <main class="workspace">
      <div class="tabs">
        <button class="tab-overview" aria-label="Registerübersicht"><svg viewBox="0 0 18 14"><path class="mid" d="M1 1h6.500v4.500H1zM10.500 1H17v4.500h-6.500zM1 8.500h6.500V13H1zM10.500 8.500H17V13h-6.500z"/></svg></button>
        <button class="tab"><svg class="accent"><use href="#story"/></svg>(!) 0. EG [0. EG]</button>
        <button class="tab-menu" aria-label="Registeroptionen"><svg viewBox="0 0 22 16"><path d="M.5 8 5.500 2.500 9 4v7.500H1.500M5.500 2.500 10 3l4 4v4.500H9M9 7l5 1M16 9v5M18 11h3M18 13.500h3"/></svg><svg class="chev"><use href="#down"/></svg></button>
      </div>

      <div class="canvas">
        <i class="edge top"></i><i class="edge bottom"></i><i class="edge left"></i><i class="edge right"></i>

        <form class="coords" aria-label="Koordinaten">
          <i class="coords-grip"></i>
          <button type="button" class="key" aria-label="Ursprung"><svg class="small"><use href="#gravity"/></svg></button>
          <button type="button" class="key" aria-label="Hilfsraster"><svg><use href="#guides"/></svg></button>
          <button type="button" class="key long" aria-label="Rasterachsen"><svg><use href="#gridaxes"/></svg><svg class="chev"><use href="#next"/></svg></button>
          <button type="button" class="key long" aria-label="Fangpunkte"><svg viewBox="0 0 18 18"><path d="M8 6.500v5M5.500 9h5"/></svg><svg class="chev"><use href="#next"/></svg></button>
          <i class="bar"></i>
          <button type="button" class="delta">Δ</button>
          <div class="pair xy">
            <label for="cx">⌇x :</label><input id="cx" class="selected" value="80000000,000">
            <label for="cy">⌇y :</label><input id="cy" value="80000000,000">
          </div>
          <i class="bar"></i>
          <button type="button" class="delta">Δ</button>
          <div class="pair rw">
            <label for="cr">⌇r :</label><input id="cr" value="80000000,000">
            <label for="cw">w:</label><input id="cw" value="30,93°">
          </div>
          <i class="bar"></i>
          <button type="button" class="key long off" aria-label="Schwerkraft" disabled><svg><use href="#nogravity"/></svg><svg class="chev"><use href="#next"/></svg></button>
          <div class="height">
            <div class="height-row"><label for="cz">⌇z :</label><input id="cz" value="0,000"></div>
            <div class="height-row"><span>zu Projekturspr...</span><button type="button" class="round" aria-label="Bezug wählen"><svg class="chev"><use href="#next"/></svg></button></div>
          </div>
        </form>

        <svg class="markup" viewBox="0 0 1300 785" preserveAspectRatio="xMidYMin meet" aria-hidden="true">
          <defs><filter id="rough" x="0" y="0" width="1300" height="785" filterUnits="userSpaceOnUse"><feTurbulence type="fractalNoise" baseFrequency="0.6" numOctaves="2" result="n"/><feDisplacementMap in="SourceGraphic" in2="n" scale="3" xChannelSelector="R" yChannelSelector="G"/></filter></defs>
          <g filter="url(#rough)">
            <path class="marker" d="M86 34h625v65H86zM1218 91h49v42h-49zM41 649h70v42H41zM120 676 1196 122M1206 103 734 66"/>
            <path class="markerhead" d="m1208 115-19-2 10 18zM718 63l17-10 1 21z"/>
          </g>
          <path class="cross" d="M55.500 674.500h8M59.500 670.500v8M1237.500 110.500h8M1241.500 106.500v8"/>
          <path class="cross strong" d="m89.500 663.500 6 6M95.500 663.500l-6 6"/>
        </svg>
        <p class="note far">Weit vom<br>Projektursprung<br>entferntes Element</p>
        <p class="note origin">Projektursprung</p>
      </div>

      <div class="status">
        <div class="nav">
          <button aria-label="Vorheriger Zoom"><svg><use href="#zback"/></svg></button>
          <button class="off" aria-label="Nächster Zoom"><svg><use href="#zforward"/></svg></button>
          <button aria-label="Vergrößern"><svg><use href="#zoomin"/></svg></button>
        </div>
        <button class="opt"><svg><use href="#zoomfit"/></svg><span>0.000011%</span><svg class="chev"><use href="#next"/></svg></button>
        <button class="opt"><svg><use href="#orient"/></svg><span>0,00°</span><svg class="chev"><use href="#next"/></svg></button>
        <button class="opt"><svg><use href="#ruler"/></svg><span>1:100</span><svg class="chev"><use href="#next"/></svg></button>
        <button class="opt"><svg><use href="#layers"/></svg><span>Raum</span><svg class="chev"><use href="#next"/></svg></button>
        <button class="opt"><svg><use href="#structure"/></svg><span>Komplettes...</span><svg class="chev"><use href="#next"/></svg></button>
        <button class="opt"><svg><use href="#pen"/></svg><span>04 S/W 1:20/...</span><svg class="chev"><use href="#next"/></svg></button>
        <button class="opt"><svg><use href="#frame"/></svg><span>00 Arbeitsei...</span><svg class="chev"><use href="#next"/></svg></button>
        <button class="opt"><svg><use href="#override"/></svg><span>Keine Übers...</span><svg class="chev"><use href="#next"/></svg></button>
        <button class="opt"><svg><use href="#renov"/></svg><span>00 Reiner N...</span><svg class="chev"><use href="#next"/></svg></button>
        <button class="opt"><svg><use href="#houses"/></svg><span>Nur Hauptm...</span><svg class="chev"><use href="#next"/></svg></button>
        <button class="opt"><svg><use href="#dimstd"/></svg><span>DIN 1356 - R...</span><svg class="chev"><use href="#next"/></svg></button>
      </div>
    </main>

    <aside class="navigator" aria-label="Navigator">
      <i class="grip"></i>
      <div class="maps">
        <button class="map on" aria-label="Projektmappe"><svg><use href="#project"/></svg></button>
        <i class="bar"></i>
        <button class="map" aria-label="Ausschnitt-Mappe"><svg><use href="#viewmap"/></svg></button>
        <button class="map" aria-label="Layoutbuch"><svg><use href="#layout"/></svg></button>
        <button class="map" aria-label="Publisher"><svg><use href="#publish"/></svg></button>
        <button class="mapmenu" aria-label="Menü"><svg class="lines" viewBox="0 0 12 10"><path d="M0 .5h12M0 4.500h12M0 8.500h12"/></svg><svg class="chev"><use href="#next"/></svg></button>
      </div>
      <div class="search"><svg><use href="#magnifier"/></svg><input type="search" aria-label="Projektmappe durchsuchen" placeholder="Projektmappe durchsuchen"></div>
      <div class="browser">
        <ul class="tree">
          <li class="l0 open"><svg><use href="#project"/></svg>test</li>
          <li class="l1 open"><svg class="shaded"><use href="#story"/></svg>Geschosse</li>
          <li class="l2"><svg><use href="#story"/></svg>1. OG</li>
          <li class="l2 current"><svg><use href="#story"/></svg>0. EG</li>
          <li class="l2"><svg><use href="#story"/></svg>-1. UG</li>
          <li class="l1"><svg><use href="#sections"/></svg>Schnitte</li>
          <li class="l1"><svg><use href="#elevations"/></svg>Ansichten</li>
          <li class="l1"><svg><use href="#interiors"/></svg>Innenansichten</li>
          <li class="l1"><svg><use href="#worksheets"/></svg>Arbeitsblätter</li>
          <li class="l1"><svg><use href="#details"/></svg>Details</li>
          <li class="l1"><svg><use href="#docs3d"/></svg>3D-Dokumente</li>
          <li class="l1 open"><svg><use href="#box3d"/></svg>3D</li>
          <li class="l2"><svg><use href="#persp"/></svg>Allgemeine Perspektive</li>
          <li class="l2"><svg><use href="#axon"/></svg>Allgemeine Axonometrie</li>
          <li class="l2"><svg><use href="#anim"/></svg>00 Neue Animation</li>
          <li class="l1 open"><svg><use href="#table"/></svg>Auswertungen</li>
          <li class="l2 open"><svg><use href="#hatch"/></svg>Elemente</li>
          <li class="l3"><svg><use href="#table"/></svg>00-01 Berechnung</li>
          <li class="l3"><svg><use href="#table"/></svg>00-02 Räume - Raumliste</li>
          <li class="l3 cut"><svg><use href="#table"/></svg></li>
        </ul>
        <i class="vscroll"></i>
        <i class="hscroll"></i>
      </div>
      <div class="actions">
        <button aria-label="Neu"><svg><use href="#plus"/></svg></button>
        <button aria-label="Einstellungen"><svg><use href="#list"/></svg></button>
        <button aria-label="Löschen"><svg><use href="#delete"/></svg></button>
      </div>
      <button class="group props">Beschreibungen</button>
      <div class="storyname"><svg><use href="#story"/></svg><label for="sname">0.</label><input id="sname" value="EG"></div>
      <button class="settings">Einstellungen...</button>
      <i class="grip second"></i>
      <div class="reference">
        <button class="key" aria-label="Transparentpause"><svg><use href="#trace"/></svg></button>
        <button class="key refname off" disabled><svg><use href="#story"/></svg><span>0. EG</span><svg class="chev"><use href="#next"/></svg></button>
      </div>
      <div class="refactions off">
        <button aria-label="Tauschen"><svg><use href="#swap"/></svg></button>
        <button class="push" aria-label="Verschieben"><svg><use href="#move"/></svg></button>
        <button aria-label="Drehen"><svg><use href="#rotate"/></svg></button>
        <button aria-label="Zurücksetzen"><svg><use href="#backswap"/></svg></button>
        <button aria-label="Aktualisieren"><svg><use href="#refresh"/></svg></button>
      </div>
      <div class="mix">
        <label for="m1">Transparentpause:</label>
        <div class="mixrow">
          <button class="key off" aria-label="Farbe der Transparentpause" disabled><i class="swatch"></i><svg class="chev"><use href="#next"/></svg></button>
          <input id="m1" type="range" value="100" disabled>
          <button class="key narrow off" aria-label="Mehr" disabled><svg class="chev"><use href="#next"/></svg></button>
        </div>
        <label for="m2">Aktiv:</label>
        <div class="mixrow">
          <button class="key off" aria-label="Farbe des aktiven Geschosses" disabled><i class="swatch wheel"></i><svg class="chev"><use href="#next"/></svg></button>
          <input id="m2" type="range" value="100" disabled>
          <span class="narrow"></span>
        </div>
      </div>
      <div class="bottomactions off">
        <button aria-label="Ziehen"><svg><use href="#hand"/></svg></button>
        <button aria-label="Überlagern"><svg><use href="#overlap"/></svg></button>
        <button aria-label="Teilen"><svg><use href="#split"/></svg></button>
        <button aria-label="Füllungen ausblenden"><svg><use href="#hidehatch"/></svg></button>
      </div>
    </aside>
  </div>

  <footer class="hint">
    <span>Klicken Sie mit dem Cursor auf ein Element oder ziehen Sie einen Auswahlbereich auf. Drücken Sie für Morphbearbeitung Strg/Ctrl+Umsch, um zwischen Element-/Unterelement-Auswahl zu wechseln.</span>
    <div class="brand"><svg><use href="#windows"/></svg><i class="bar"></i><a href="#">GRAPHISOFT <span>ID</span></a></div>
  </footer>
</div>
</body>
</html>
```

FILE: styles.css
```css
* { box-sizing: border-box; }
html, body { height: 100%; margin: 0; }
body { font: 400 11px/14px Roboto, Inter, sans-serif; color: #1c1c1c; background: #ebebeb; }
button, input { font: inherit; color: inherit; margin: 0; padding: 0; border: 0; background: none; min-width: 0; }
button { display: flex; align-items: center; }
i { display: block; flex: none; }
ul, p { margin: 0; padding: 0; list-style: none; }

/* icons */
.sprite { position: absolute; width: 0; height: 0; }
svg { display: block; flex: none; width: 18px; height: 18px; fill: none; stroke: #2f3b42; stroke-width: 1; overflow: visible; }
svg.chev { width: 10px; height: 10px; stroke: #222; }
svg.small { width: 14px; height: 14px; }
.bold { stroke-width: 1.700; }
.thick { stroke-width: 2; }
.mid { stroke-width: 1.4; }
.solid { fill: #2f3b42; stroke: none; }
.blue { stroke: #4480f5; }
.bluefill { fill: #2f6cf0; stroke: none; }
.bluebox { fill: #e4ecfd; stroke: #4480f5; }
.orange { stroke: #f08a35; stroke-width: 1.500; }
.gray { stroke: #8d8f92; }
.graybox { fill: #8a8d90; }
.red { stroke: #ee4b2b; stroke-width: 2; }
.dash { stroke-dasharray: 2 1; }
.dots { stroke-dasharray: 1 1; }
.box { fill: #c0bfc4; }
.cursor { fill: #8d9194; }
.shade { fill: #e9e9e9; }
.accent { stroke: #4480f5; }
.shaded { fill: #ececec; }
.glyph { font: 700 7px Roboto, sans-serif; fill: #2f3b42; stroke: none; }
.glyph.big { font-size: 11px; font-weight: 500; }
.glyph.large { font-size: 13px; font-weight: 400; }
.off > svg, .off button > svg { opacity: .5; }

.app { height: 100vh; display: flex; flex-direction: column; overflow: hidden; }

/* top toolbar */
.toolbar { display: flex; height: 31px; padding-left: 4px; border-bottom: 1px solid #e2e2e2; }
.tb { flex: none; justify-content: center; width: 26px; height: 26px; margin: 0 1px; border-radius: 4px; }
.tb.drop { width: 12px; }
.tb.on { background: #c0bfc4; }
.sep { width: 2px; height: 20px; margin: 3px 4px; background: #dcdcdc; }
.sep.wide { margin-right: 5px; }
.toolbar-rest { flex: 1; margin-left: 3px; background: #e6e6e6; }

/* info box */
.infobox { height: 57px; padding: 0 5px; border-bottom: 1px solid #e0e0e0; }
.infobox-label { display: block; height: 22px; font-size: 10px; line-height: 14px; }
.infobox-row { display: flex; align-items: flex-end; gap: 1px; height: 27px; }
.chip { justify-content: space-between; width: 38px; height: 18px; padding: 0 1px 0 6px; border-radius: 4px; background: #fff; box-shadow: 0 0 1px #aaa; }
.chip svg:first-child { width: 18px; height: 14px; }
.chip.pressed { justify-content: center; padding: 0; background: #c0bfc4; box-shadow: none; }
.chip.tall { width: 45px; height: 27px; margin-left: 1px; padding: 0 1px 0 5px; border-radius: 5px; }
.chip.tall svg:first-child { width: 22px; height: 18px; }

.main { flex: 1; display: flex; min-height: 0; }

/* toolbox */
.toolbox { width: 130px; border-right: 1px solid #dedede; }
.grip { width: 50px; height: 1px; margin: 4px auto 2px; background: #aaa; }
.tools { background: #f4f1ed; }
.tool { gap: 9px; width: 100%; height: 26px; padding-left: 6px; white-space: nowrap; color: #111; border-radius: 0 4px 4px 0; }
.tool svg { width: 24px; height: 20px; }
.tool.active { background: #c0bfc4; }
.group { gap: 7px; width: 100%; height: 20px; padding-left: 1px; background: #d5d5d5; border-bottom: 1px solid #ebebeb; }
.tool + .group { height: 21px; }
.group::before { content: ""; width: 8px; height: 7px; background: #8c9092; clip-path: polygon(0 0, 100% 0, 50% 100%); }
.group.closed::before { clip-path: polygon(0 0, 100% 50%, 0 100%); }

/* workspace */
.workspace { flex: 1; display: flex; flex-direction: column; min-width: 0; }
.tabs { display: flex; height: 20px; background: #e2e2e2; }
.tab-overview { width: 31px; padding-left: 7px; background: #e6e6e6; }
.tab-overview svg { height: 14px; }
.tab { justify-content: center; gap: 2px; width: 280px; background: #fff; color: #444; }
.tab svg { height: 16px; }
.tab-menu { justify-content: space-between; width: 47px; margin-left: auto; padding: 0 4px 0 7px; background: #f8f8f8; }
.tab-menu svg:first-child { width: 22px; height: 16px; }
.canvas { position: relative; flex: 1; background: #fff; overflow: hidden; }

.edge { position: absolute; display: flex; align-items: center; justify-content: center; background: #f4f4f4; border-radius: 3px; }
.edge::before { content: ""; }
.edge.top, .edge.bottom { left: 50%; width: 30px; height: 15px; margin-left: -14px; }
.edge.top { top: 1px; }
.edge.bottom { bottom: 1px; }
.edge.left, .edge.right { top: 377px; width: 15px; height: 30px; }
.edge.left { left: 1px; }
.edge.right { right: 0; }
.edge.top::before, .edge.bottom::before { width: 24px; height: 1px; background: repeating-linear-gradient(90deg, #f2a766 0 5px, transparent 5px 6px); }
.edge.bottom::before { background: repeating-linear-gradient(90deg, #d0c6be 0 5px, transparent 5px 6px); }
.edge.left::before, .edge.right::before { width: 1px; height: 24px; background: repeating-linear-gradient(#f29a4d 0 5px, transparent 5px 6px); }

/* coordinate palette */
.coords { position: absolute; left: 99px; top: 49px; display: flex; align-items: center; gap: 2px; width: 599px; height: 33px; background: #ececec; }
.coords-grip { align-self: stretch; width: 16px; margin-right: 2px; background: radial-gradient(circle at 8px 8px, #d8d8d8 4px, transparent 5px) #f6f6f6; border-right: 1px solid #aaa; }
.key { flex: none; justify-content: center; width: 26px; height: 27px; border-radius: 5px; background: #fff; box-shadow: 0 0 2px #b5b5b5; }
.key.long { width: 40px; justify-content: space-between; padding: 0 1px 0 6px; }
.key.off { background: #f4f4f4; box-shadow: 0 0 1px #c4c4c4; }
.bar { width: 1px; height: 26px; background: #d9d9d9; }
.coords .bar { margin: 0 3px; }
.delta { flex: none; justify-content: center; width: 13px; height: 27px; border-radius: 4px; background: #c0bfc4; font-size: 13px; font-weight: 700; }
.pair { display: grid; grid-template-rows: 14px 14px; align-items: center; height: 28px; }
.pair.xy { grid-template-columns: 29px 83px; }
.pair.rw { grid-template-columns: 28px 83px; }
.pair label { font-weight: 500; text-align: right; padding-right: 6px; white-space: nowrap; }
.coords input { width: 100%; height: 13px; padding-left: 1px; background: #fff; }
.coords .selected { background: linear-gradient(90deg, #dadada 76px, #fff 76px); }
.height { flex: 1; padding: 0 2px 0 9px; }
.height-row { display: flex; align-items: center; justify-content: space-between; height: 14px; }
.height-row label { width: 20px; font-weight: 500; white-space: nowrap; flex: none; }
.round { justify-content: center; width: 13px; height: 13px; border-radius: 4px; background: #fff; box-shadow: 0 0 1px #999; }

/* annotations */
.markup { position: absolute; left: 0; top: 0; width: 100%; height: 100%; }
.marker { stroke: #ed4ff2; stroke-width: 4; }
.markerhead { fill: #ed4ff2; stroke: none; }
.cross { stroke: #111; }
.cross.strong { stroke: #444; stroke-width: 2; }
.note { position: absolute; font: italic 700 18px/22px "Liberation Sans", Arial, sans-serif; color: #ed4ff2; white-space: nowrap; }
.note.far { right: 1px; top: 14px; text-align: center; }
.note.origin { left: 8px; top: 614px; }

/* status row */
.status { display: flex; height: 17px; }
.nav { display: flex; width: 67px; }
.nav button { justify-content: center; width: 22px; }
.status svg { width: 16px; height: 14px; }
.status svg.chev { width: 10px; height: 10px; }
.opt { flex: 1; padding: 0 3px 0 5px; border-left: 1px solid #d6d6d6; }
.opt span { flex: 1; padding-left: 5px; text-align: center; white-space: nowrap; overflow: hidden; }

/* navigator */
.navigator { display: flex; flex-direction: column; width: 171px; border-left: 1px solid #dcdcdc; }
.navigator .grip { width: 66px; margin: 4px auto; }
.maps { display: flex; align-items: center; height: 26px; padding-left: 3px; }
.map { justify-content: center; width: 28px; height: 26px; }
.map svg, .tree svg, .search svg, .actions svg { width: 18px; height: 16px; }
.map.on { width: 26px; border-radius: 4px; background: #c0bfc4; }
.maps .bar { height: 18px; margin: 0 5px 0 7px; }
.mapmenu { gap: 4px; justify-content: flex-end; width: 31px; height: 20px; margin: 0 1px 0 auto; padding-right: 1px; border-radius: 5px; background: #fff; box-shadow: 0 0 1px #aaa; }
.mapmenu .lines { width: 12px; height: 10px; }
.search { display: flex; align-items: center; gap: 3px; height: 19px; margin: 7px 1px 3px 3px; padding-left: 4px; background: #fff; border-bottom: 1px solid #bbb; }
.search input { flex: 1; margin-right: 20px; appearance: none; outline: 0; }
.search input::placeholder { color: #b4b4b4; opacity: 1; }
.browser { flex: 1; display: grid; grid-template: minmax(0, 1fr) 13px / minmax(0, 1fr) 12px; min-height: 0; background: #fafafa; }
.tree { display: flex; flex-direction: column; overflow: hidden; background: #fff; border: solid #e0e0e0; border-width: 0 1px 1px 0; color: #111; }
.tree li { flex: 1; display: flex; align-items: center; gap: 3px; white-space: nowrap; min-height: 0; }
.tree .cut { flex: none; height: 5px; align-items: flex-start; }
.tree .l0 { padding-left: 6px; }
.tree .l1 { padding-left: 30px; }
.tree .l2 { padding-left: 43px; }
.tree .l3 { padding-left: 56px; }
.tree .l1.open { padding-left: 19px; }
.tree .l2.open { padding-left: 32px; }
.open::before { content: ""; flex: none; width: 5px; height: 5px; margin: -3px 3px 0 0; border: solid #777; border-width: 0 1px 1px 0; transform: rotate(45deg); }
.current { background: #dcdcdc; font-weight: 700; }
.vscroll { width: 7px; height: 118px; margin: 3px auto 0 4px; border-radius: 4px; background: #c2c2c2; }
.hscroll { width: 68px; height: 7px; margin: 3px 0 0 3px; border-radius: 4px; background: #c2c2c2; }
.actions { display: flex; height: 33px; padding: 0 0 2px 3px; }
.actions button { justify-content: center; width: 28px; }
.group.props { gap: 11px; flex: none; margin-left: 2px; width: auto; padding-left: 5px; border-radius: 3px; }
.storyname { display: flex; align-items: center; height: 25px; padding: 0 1px 0 3px; }
.storyname svg { width: 13px; height: 12px; stroke-width: 1.500; }
.storyname label { width: 40px; margin-left: 4px; }
.storyname input { flex: 1; height: 15px; padding-left: 3px; background: #fff; box-shadow: 0 1px 1px #bbb; }
.settings { flex: none; justify-content: center; height: 18px; margin: 0 1px 4px 3px; border-radius: 5px; background: #fff; box-shadow: 0 0 1px #aaa; }
.navigator .grip.second { width: auto; height: 6px; margin: 0; border-top: 1px solid #d6d6d6; background: linear-gradient(#aaa, #aaa) center 3px / 66px 1px no-repeat; }
.reference { display: flex; gap: 2px; padding: 4px 1px 4px 3px; }
.reference .key { height: 26px; }
.reference .refname { flex: 1; justify-content: flex-start; padding: 0 1px 0 3px; color: #aaa; }
.refname span { flex: 1; margin-left: 4px; text-align: left; }
.refname svg { height: 16px; }
.refactions { display: flex; height: 33px; padding: 0 0 8px 2px; border-bottom: 1px solid #d8d8d8; }
.refactions button, .bottomactions button { justify-content: center; width: 28px; }
.refactions .push { margin-left: auto; }
.mix { padding: 6px 1px 6px 3px; border-bottom: 1px solid #d6d6d6; color: #7c7c7c; }
.mix label { display: block; height: 18px; }
.mixrow { display: flex; gap: 3px; height: 26px; }
.mixrow + label { margin-top: 6px; }
.mixrow .key { height: 26px; }
.narrow, .key.narrow { flex: none; width: 12px; }
.swatch { width: 11px; height: 11px; margin-left: 2px; background: #f3978a; }
.wheel { border-radius: 50%; border: 1px solid #888; background: conic-gradient(#e98b80 0 33%, #86a2e8 33% 66%, #7fba85 66%); }
.mix input { flex: 1; height: 22px; appearance: none; background: repeating-linear-gradient(90deg, #d9d9d9 0 2px, transparent 2px 12px) 1px 7px / 112px 8px no-repeat, linear-gradient(#dedede, #dedede) 1px 10px / 112px 2px no-repeat; }
.mix input::-webkit-slider-thumb { appearance: none; width: 7px; height: 14px; border-radius: 4px; background: #f4f4f4; box-shadow: 0 0 1px #aaa; }
.bottomactions { display: flex; height: 33px; padding: 3px 0 0 30px; }

/* footer */
.hint { display: flex; align-items: center; justify-content: space-between; height: 18px; padding: 0 9px 0 3px; border-top: 1px solid #e0e0e0; background: linear-gradient(#e6e6e6, #d4d4d4); white-space: nowrap; }
.brand { display: flex; align-items: center; gap: 7px; }
.brand svg { height: 14px; }
.brand .bar { height: 14px; background: #888; }
.brand a { color: #2f3b42; text-decoration: none; font: 500 13px/16px Lato, sans-serif; }
.brand a span { font-weight: 300; }
```
